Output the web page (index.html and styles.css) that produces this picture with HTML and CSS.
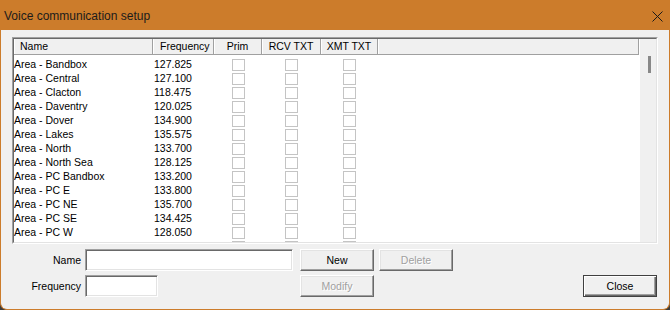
FILE: index.html
```html
<!DOCTYPE html>
<html lang="en">
<head>
  <meta charset="UTF-8" />
  <title>Voice communication setup</title>
  <link rel="stylesheet" href="styles.css">
</head>
<body>

<div class="window">
  <div class="titlebar">
    <span class="title">Voice communication setup</span>
    <svg class="close-x" width="11" height="11" viewBox="0 0 11 11">
      <path d="M0.5 0.5 L10.5 10.5 M10.5 0.5 L0.5 10.5" stroke="#1a1a1a" stroke-width="1" fill="none" />
    </svg>
  </div>

  <div class="client">
    <!-- liste des fréquences -->
    <div class="listbox">
      <div class="listbox-inner">
        <div class="list-main">
          <div class="list-head">
            <div class="hcell c-name">Name</div>
            <div class="hcell c-freq">Frequency</div>
            <div class="hcell c-prim center">Prim</div>
            <div class="hcell c-rcv center">RCV TXT</div>
            <div class="hcell c-xmt center">XMT TXT</div>
            <div class="hcell c-rest"></div>
          </div>
          <div class="list-rows">
            <div class="row"><div class="cell c-name">Area - Bandbox</div><div class="cell c-freq">127.825</div><div class="cell c-prim"><span class="chk"></span></div><div class="cell c-rcv"><span class="chk"></span></div><div class="cell c-xmt"><span class="chk"></span></div></div>
            <div class="row"><div class="cell c-name">Area - Central</div><div class="cell c-freq">127.100</div><div class="cell c-prim"><span class="chk"></span></div><div class="cell c-rcv"><span class="chk"></span></div><div class="cell c-xmt"><span class="chk"></span></div></div>
            <div class="row"><div class="cell c-name">Area - Clacton</div><div class="cell c-freq">118.475</div><div class="cell c-prim"><span class="chk"></span></div><div class="cell c-rcv"><span class="chk"></span></div><div class="cell c-xmt"><span class="chk"></span></div></div>
            <div class="row"><div class="cell c-name">Area - Daventry</div><div class="cell c-freq">120.025</div><div class="cell c-prim"><span class="chk"></span></div><div class="cell c-rcv"><span class="chk"></span></div><div class="cell c-xmt"><span class="chk"></span></div></div>
            <div class="row"><div class="cell c-name">Area - Dover</div><div class="cell c-freq">134.900</div><div class="cell c-prim"><span class="chk"></span></div><div class="cell c-rcv"><span class="chk"></span></div><div class="cell c-xmt"><span class="chk"></span></div></div>
            <div class="row"><div class="cell c-name">Area - Lakes</div><div class="cell c-freq">135.575</div><div class="cell c-prim"><span class="chk"></span></div><div class="cell c-rcv"><span class="chk"></span></div><div class="cell c-xmt"><span class="chk"></span></div></div>
            <div class="row"><div class="cell c-name">Area - North</div><div class="cell c-freq">133.700</div><div class="cell c-prim"><span class="chk"></span></div><div class="cell c-rcv"><span class="chk"></span></div><div class="cell c-xmt"><span class="chk"></span></div></div>
            <div class="row"><div class="cell c-name">Area - North Sea</div><div class="cell c-freq">128.125</div><div class="cell c-prim"><span class="chk"></span></div><div class="cell c-rcv"><span class="chk"></span></div><div class="cell c-xmt"><span class="chk"></span></div></div>
            <div class="row"><div class="cell c-name">Area - PC Bandbox</div><div class="cell c-freq">133.200</div><div class="cell c-prim"><span class="chk"></span></div><div class="cell c-rcv"><span class="chk"></span></div><div class="cell c-xmt"><span class="chk"></span></div></div>
            <div class="row"><div class="cell c-name">Area - PC E</div><div class="cell c-freq">133.800</div><div class="cell c-prim"><span class="chk"></span></div><div class="cell c-rcv"><span class="chk"></span></div><div class="cell c-xmt"><span class="chk"></span></div></div>
            <div class="row"><div class="cell c-name">Area - PC NE</div><div class="cell c-freq">135.700</div><div class="cell c-prim"><span class="chk"></span></div><div class="cell c-rcv"><span class="chk"></span></div><div class="cell c-xmt"><span class="chk"></span></div></div>
            <div class="row"><div class="cell c-name">Area - PC SE</div><div class="cell c-freq">134.425</div><div class="cell c-prim"><span class="chk"></span></div><div class="cell c-rcv"><span class="chk"></span></div><div class="cell c-xmt"><span class="chk"></span></div></div>
            <div class="row"><div class="cell c-name">Area - PC W</div><div class="cell c-freq">128.050</div><div class="cell c-prim"><span class="chk"></span></div><div class="cell c-rcv"><span class="chk"></span></div><div class="cell c-xmt"><span class="chk"></span></div></div>
            <div class="row"><div class="cell c-name">Area - South Central</div><div class="cell c-freq">133.800</div><div class="cell c-prim"><span class="chk"></span></div><div class="cell c-rcv"><span class="chk"></span></div><div class="cell c-xmt"><span class="chk"></span></div></div>
          </div>
        </div>
        <div class="vscroll"><div class="thumb"></div></div>
      </div>
    </div>

    <!-- édition -->
    <div class="form">
      <label class="lbl" for="name">Name</label>
      <input id="name" class="field field-name" type="text" />
      <button class="btn">New</button>
      <button class="btn" disabled>Delete</button>
      <span></span>
      <span></span>

      <label class="lbl" for="freq">Frequency</label>
      <input id="freq" class="field field-freq" type="text" />
      <button class="btn" disabled>Modify</button>
      <span></span>
      <span></span>
      <button class="btn btn-default">Close</button>
    </div>
  </div>
</div>

</body>
</html>
```

FILE: styles.css
```css
html, body {
  margin: 0;
  padding: 0;
  background: #3c3c3c;
}

body {
  font-family: 'Liberation Sans', Arial, sans-serif;
  font-size: 10.5px;
  color: #000;
  width: 670px;
  height: 310px;
  overflow: hidden;
}

.window {
  width: 670px;
  height: 310px;
  box-sizing: border-box;
  display: flex;
  flex-direction: column;
  background: #f0f0f0;
  border: 1px solid #cc7c2b;
  border-top: none;
  border-radius: 0 0 7px 7px;
  overflow: hidden;
}

.titlebar {
  height: 30px;
  margin: 0 -1px;
  background: #cc7c2b;
  display: flex;
  align-items: center;
  justify-content: space-between;
  padding: 0 7px 0 4px;
}

.title {
  font-size: 12px;
  color: #1b1b1b;
  padding-top: 2px;
}

.close-x {
  display: block;
  margin-top: 2px;
}

.client {
  flex: 1;
  padding: 7px 11px 0 11px;
  display: flex;
  flex-direction: column;
}

/* liste */
.listbox {
  height: 207px;
  box-sizing: border-box;
  border: 1px solid;
  border-color: #a0a0a0 #ffffff #ffffff #a0a0a0;
}

.listbox-inner {
  height: 100%;
  box-sizing: border-box;
  border: 1px solid;
  border-color: #696969 #e3e3e3 #e3e3e3 #696969;
  display: flex;
  background: #fff;
}

.list-main {
  flex: 1;
  display: flex;
  flex-direction: column;
  overflow: hidden;
}

.list-head {
  display: flex;
  height: 16px;
  box-sizing: border-box;
  background: #f0f0f0;
  margin-right: 1px;
}

.hcell {
  height: 16px;
  box-sizing: border-box;
  line-height: 15px;
  padding-left: 6px;
  border-right: 1px solid #a0a0a0;
  border-bottom: 1px solid #a0a0a0;
  box-shadow: inset 1px 0 #fff;
  white-space: nowrap;
}

.hcell.center {
  padding-left: 0;
  text-align: center;
}

.hcell.c-freq {
  padding-left: 7px;
}

.c-name { width: 139px; }
.c-freq { width: 61px; }
.c-prim { width: 48px; }
.c-rcv { width: 59px; }
.c-xmt { width: 57px; }
.c-rest { flex: 1; }

.list-rows {
  flex: 1;
  overflow: hidden;
  padding-top: 2px;
}

.row {
  display: flex;
  height: 14px;
  line-height: 14px;
}

.cell {
  box-sizing: border-box;
  white-space: nowrap;
  overflow: hidden;
}

.cell.c-freq {
  padding-left: 1px;
}

.cell.c-prim, .cell.c-rcv, .cell.c-xmt {
  display: flex;
  justify-content: center;
  padding-top: 2px;
}

.chk {
  display: block;
  width: 13px;
  height: 12px;
  box-sizing: border-box;
  border: 1px solid #c4c4c4;
  background: #fff;
}

.vscroll {
  width: 16px;
  background: #f0f0f0;
}

.thumb {
  width: 3px;
  height: 17px;
  margin: 17px 0 0 8px;
  background: #888;
}

/* formulaire */
.form {
  display: grid;
  grid-template-columns: 73px 215px 79px 74px 1fr 74px;
  grid-template-rows: 22px 22px;
  row-gap: 4px;
  margin-top: 5px;
  margin-right: 1px;
  align-items: center;
}

.lbl {
  text-align: right;
  padding-right: 4px;
}

.field {
  height: 22px;
  box-sizing: border-box;
  border: 1px solid;
  border-color: #a0a0a0 #ffffff #ffffff #a0a0a0;
  box-shadow: inset 1px 1px #696969, inset -1px -1px #e3e3e3;
  background: #fff;
  padding: 0 3px;
  font: inherit;
  outline: none;
}

.field-name { width: 208px; }
.field-freq { width: 73px; }

.btn {
  width: 74px;
  height: 22px;
  box-sizing: border-box;
  font: inherit;
  color: #000;
  background: #f0f0f0;
  border: 1px solid;
  border-color: #ffffff #696969 #696969 #ffffff;
  box-shadow: inset -1px -1px #a0a0a0, inset 1px 1px #e3e3e3;
  padding: 0;
}

.btn:disabled {
  color: #a0a0a0;
  text-shadow: 1px 1px #fff;
}

.btn-default {
  border: 1px solid #404040;
  box-shadow: inset 1px 1px #fff, inset -1px -1px #696969, inset -2px -2px #a0a0a0;
}
```
